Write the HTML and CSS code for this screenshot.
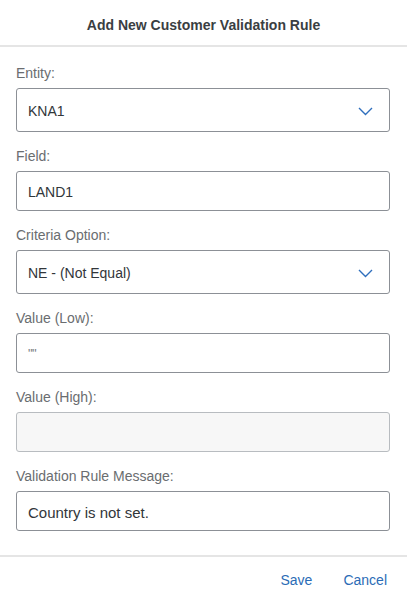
FILE: index.html
```html
<!DOCTYPE html>
<html lang="en">
<head>
<meta charset="utf-8">
<title>Add New Customer Validation Rule</title>
<link rel="stylesheet" href="styles.css">
</head>
<body>
<div class="dialog">
  <header class="dialog-header">
    <h1 class="dialog-title">Add New Customer Validation Rule</h1>
  </header>
  <main class="dialog-content">
    <div class="form-field">
      <label class="form-label">Entity:</label>
      <div class="control control-select">
        <span class="control-text">KNA1</span>
        <span class="select-arrow">
          <svg width="15" height="9" viewBox="0 0 15 9"><polyline points="1,1 7.5,7.5 14,1" fill="none" stroke="#2f6fbd" stroke-width="1.4"/></svg>
        </span>
      </div>
    </div>
    <div class="form-field">
      <label class="form-label">Field:</label>
      <div class="control control-input">
        <span class="control-text">LAND1</span>
      </div>
    </div>
    <div class="form-field">
      <label class="form-label">Criteria Option:</label>
      <div class="control control-select">
        <span class="control-text">NE - (Not Equal)</span>
        <span class="select-arrow">
          <svg width="15" height="9" viewBox="0 0 15 9"><polyline points="1,1 7.5,7.5 14,1" fill="none" stroke="#2f6fbd" stroke-width="1.4"/></svg>
        </span>
      </div>
    </div>
    <div class="form-field">
      <label class="form-label">Value (Low):</label>
      <div class="control control-input">
        <span class="control-text control-quotes">""</span>
      </div>
    </div>
    <div class="form-field">
      <label class="form-label">Value (High):</label>
      <div class="control control-input control-disabled"></div>
    </div>
    <div class="form-field">
      <label class="form-label">Validation Rule Message:</label>
      <div class="control control-input">
        <span class="control-text control-wide">Country is not set.</span>
      </div>
    </div>
  </main>
  <footer class="dialog-footer">
    <button class="footer-button" type="button">Save</button>
    <button class="footer-button" type="button">Cancel</button>
  </footer>
</div>
</body>
</html>
```
FILE: styles.css
```css
* {
  box-sizing: border-box;
}

html, body {
  margin: 0;
  padding: 0;
  background: #ffffff;
}

body {
  font-family: "Liberation Sans", Arial, sans-serif;
  color: #32363a;
}

.dialog {
  width: 407px;
  height: 603px;
  display: flex;
  flex-direction: column;
  background: #ffffff;
}

.dialog-header {
  height: 47px;
  border-bottom: 2px solid #e5e5e5;
  display: flex;
  align-items: center;
  justify-content: center;
}

.dialog-title {
  margin: 0;
  font-size: 14px;
  font-weight: bold;
  color: #3a3e42;
  padding-top: 4px;
}

.dialog-content {
  flex: 1;
  padding: 16px 17px 0 16px;
  display: flex;
  flex-direction: column;
  gap: 14px;
}

.form-field {
  display: flex;
  flex-direction: column;
}

.form-label {
  font-size: 14px;
  line-height: 20px;
  color: #6a6d70;
  margin-bottom: 5px;
}

.control {
  display: flex;
  align-items: center;
  border: 1px solid #8c9096;
  border-radius: 3px;
  background: #ffffff;
  padding: 0 11px;
}

.control-select {
  height: 44px;
}

.control-input {
  height: 40px;
}

.control-disabled {
  background: #f7f7f7;
  border-color: #b8bcc0;
}

.control-text {
  flex: 1;
  font-size: 14px;
  color: #32363a;
  padding-top: 2px;
}

.control-wide {
  font-size: 15px;
}

.control-quotes {
  font-size: 13px;
  letter-spacing: -0.5px;
  color: #7a7e83;
  padding-top: 0;
}

.select-arrow {
  display: flex;
  align-items: center;
  margin-right: 5px;
  padding-top: 2px;
}

.dialog-footer {
  height: 48px;
  border-top: 2px solid #e5e5e5;
  display: flex;
  align-items: center;
  justify-content: flex-end;
  gap: 31px;
  padding-right: 20px;
}

.footer-button {
  border: none;
  background: none;
  padding: 0;
  font-family: "Liberation Sans", Arial, sans-serif;
  font-size: 14px;
  color: #2b6cb6;
  cursor: pointer;
}
```
